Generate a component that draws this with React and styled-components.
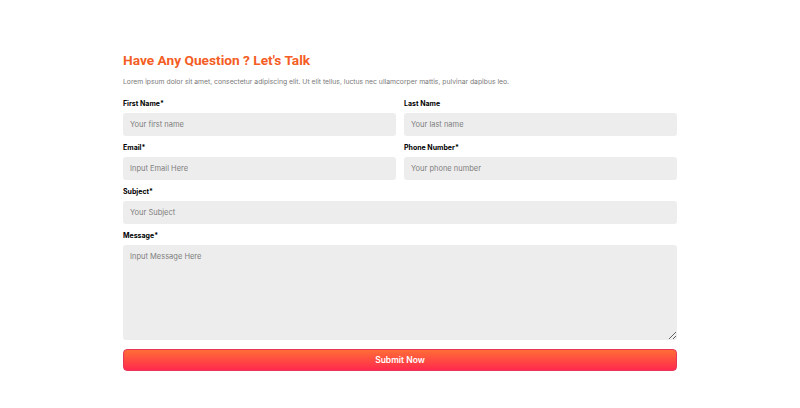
import React from 'react'
import styled, { createGlobalStyle } from 'styled-components'

const GlobalStyle = createGlobalStyle`
  * { box-sizing: border-box; }
  body {
    margin: 0;
    background: #ffffff;
    font-family: Inter, "Liberation Sans", sans-serif;
  }
`

export default function App() {
  return (
    <Page>
      <GlobalStyle />
      <Form onSubmit={(e) => e.preventDefault()}>
        <Title>Have Any Question ? Let's Talk</Title>
        <Desc>
          Lorem ipsum dolor sit amet, consectetur adipiscing elit. Ut elit tellus, luctus nec ullamcorper mattis, pulvinar dapibus leo.
        </Desc>
        <Grid>
          <Field>
            <Label>First Name*</Label>
            <Input placeholder="Your first name" />
          </Field>
          <Field>
            <Label>Last Name</Label>
            <Input placeholder="Your last name" />
          </Field>
          <Field>
            <Label>Email*</Label>
            <Input placeholder="Input Email Here" />
          </Field>
          <Field>
            <Label>Phone Number*</Label>
            <Input placeholder="Your phone number" />
          </Field>
          <Field wide>
            <Label>Subject*</Label>
            <Input placeholder="Your Subject" />
          </Field>
          <Field wide>
            <Label>Message*</Label>
            <TextArea placeholder="Input Message Here" />
          </Field>
        </Grid>
        <Submit type="submit">Submit Now</Submit>
      </Form>
    </Page>
  )
}

const Page = styled.div`
  width: 800px;
  height: 408px;
  display: flex;
  justify-content: center;
  padding-top: 50px;
`

const Form = styled.form`
  width: 554px;
  display: flex;
  flex-direction: column;
`

const Title = styled.h2`
  margin: 0;
  font-family: Roboto, "Liberation Sans", sans-serif;
  font-weight: 700;
  font-size: 13.7px;
  line-height: 20px;
  color: #f45d24;
`

const Desc = styled.p`
  margin: 6px 0 0;
  font-size: 6.8px;
  line-height: 11px;
  color: #7a7a7a;
`

const Grid = styled.div`
  margin-top: 11px;
  display: grid;
  grid-template-columns: 1fr 1fr;
  column-gap: 8px;
  row-gap: 6px;
`

const Field = styled.div`
  display: flex;
  flex-direction: column;
  gap: 3px;
  grid-column: ${(p) => (p.wide ? '1 / -1' : 'auto')};
`

const Label = styled.label`
  font-size: 7px;
  line-height: 12px;
  font-weight: 700;
  color: #000000;
`

const Input = styled.input`
  height: 23px;
  border: none;
  border-radius: 3px;
  background: #ededed;
  padding: 0 7px;
  font-family: Inter, "Liberation Sans", sans-serif;
  font-size: 7.5px;
  color: #333;
  outline: none;
  &::placeholder { color: #7d7d7d; }
`

const TextArea = styled.textarea`
  height: 95px;
  border: none;
  border-radius: 3px;
  background: #ededed;
  padding: 7px 7px;
  font-family: Inter, "Liberation Sans", sans-serif;
  font-size: 7.5px;
  color: #333;
  outline: none;
  resize: vertical;
  &::placeholder { color: #7d7d7d; }
`

const Submit = styled.button`
  margin-top: 9px;
  height: 22px;
  border: 1px solid #e8355a;
  border-radius: 4px;
  background: linear-gradient(180deg, #ff6d36 0%, #ff2a4d 100%);
  color: #ffffff;
  font-family: Inter, "Liberation Sans", sans-serif;
  font-size: 8.5px;
  font-weight: 600;
  cursor: pointer;
`
